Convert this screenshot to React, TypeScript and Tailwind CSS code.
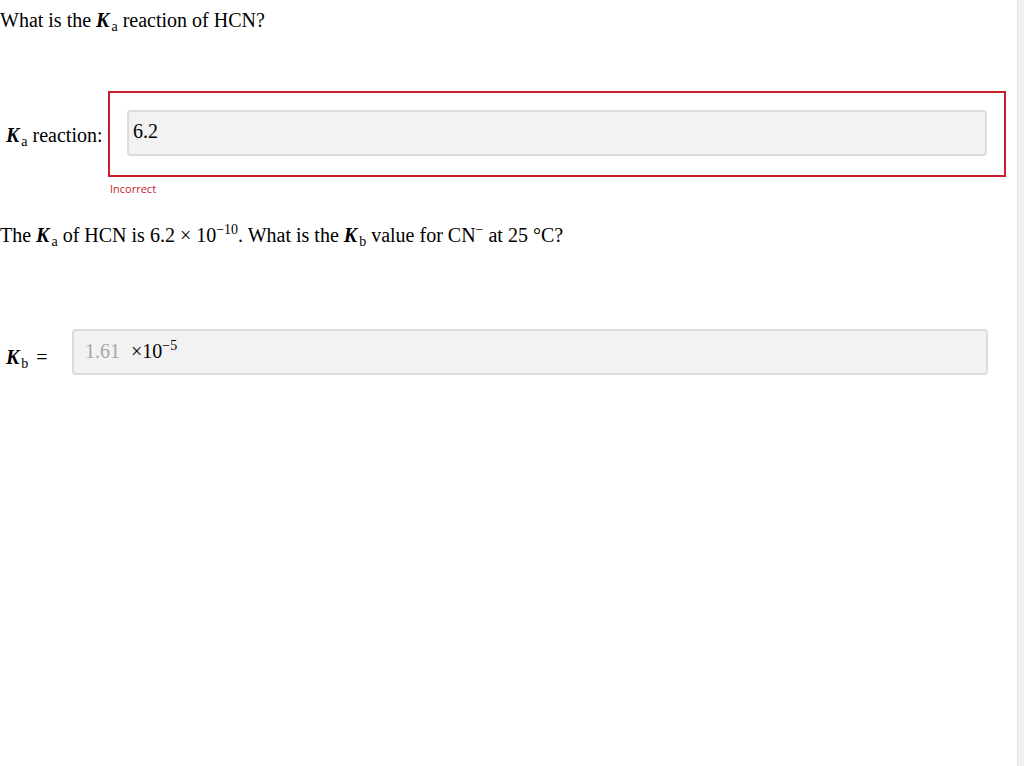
import React from 'react';

const serif = "font-['Liberation_Serif','Times_New_Roman',serif]";

function K({ sub }: { sub: string }) {
  return (
    <span className="whitespace-nowrap">
      <i className="font-bold">K</i>
      <span className="relative top-[4px] text-[14px] ml-[2px]">{sub}</span>
    </span>
  );
}

function Sup({ children }: { children: React.ReactNode }) {
  return <span className="relative top-[-8px] text-[14px]">{children}</span>;
}

export default function App() {
  return (
    <div className={`flex min-h-[766px] bg-white text-black ${serif}`}>
      <div className="flex-1">
        <p className="text-[20px] leading-[24px] pt-[8px]">
          What is the <K sub="a" /> reaction of HCN?
        </p>

        <div className="flex items-center mt-[56px]">
          <div className="w-[108px] pl-[6px] text-[20px] pt-[2px] whitespace-nowrap">
            <K sub="a" /> reaction:
          </div>
          <div className="w-[898px] h-[86px] border-2 border-[#c8202b] px-[17px] pt-[17px]">
            <div className="h-[46px] rounded-[4px] border-2 border-[#dcdcdc] bg-[#f2f2f2] pl-[4px] text-[20px] leading-[38px]">
              6.2
            </div>
          </div>
        </div>
        <div className="pl-[110px] pt-[5px] text-[11px] leading-[14px] text-[#c8202b] font-['Open_Sans',sans-serif]">
          Incorrect
        </div>

        <p className="text-[20px] leading-[24px] mt-[27px]">
          The <K sub="a" /> of HCN is 6.2 × 10<Sup>−10</Sup>. What is the <K sub="b" /> value for CN
          <Sup>−</Sup>  at 25 °C?
        </p>

        <div className="flex items-center mt-[79px]">
          <div className="w-[72px] pl-[6px] text-[20px] pt-[9px] whitespace-nowrap">
            <K sub="b" />
            <span className="ml-[8px]">=</span>
          </div>
          <div className="w-[916px] h-[46px] rounded-[4px] border-2 border-[#dcdcdc] bg-[#f2f2f2] pl-[11px] text-[20px] leading-[40px] flex">
            <span className="text-[#a8a8a8]">1.61</span>
            <span className="ml-[11px]">
              ×10<Sup>−5</Sup>
            </span>
          </div>
        </div>
      </div>
      <div className="w-[7px] border-l border-[#e2e2e2] bg-[#f1f1f1]" />
    </div>
  );
}
